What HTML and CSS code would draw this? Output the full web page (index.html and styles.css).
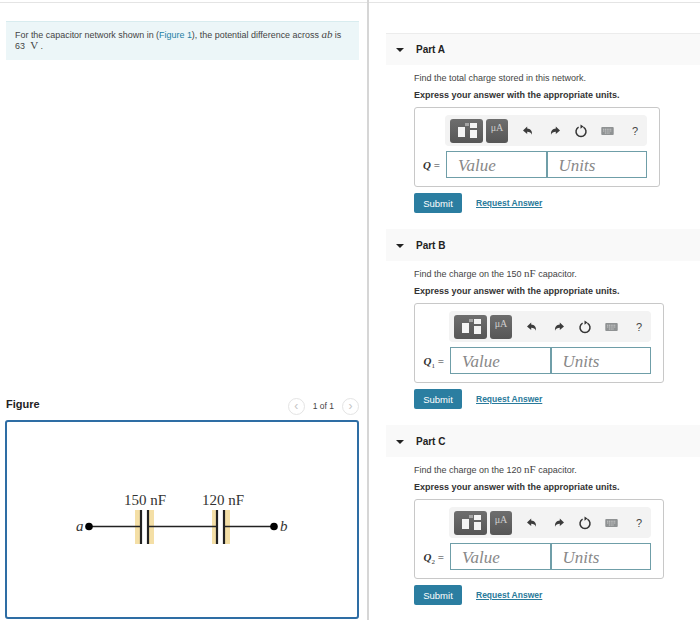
FILE: index.html
```html
<!DOCTYPE html>
<html lang="en">
<head>
<meta charset="utf-8">
<title>Capacitor network</title>
<link rel="stylesheet" href="styles.css">
</head>
<body>
<svg class="defs" width="0" height="0" aria-hidden="true">
  <symbol id="undo" viewBox="0 0 12 12"><path d="M5.200 1.500 1 5.400l4.200 3.700V6.700c2.400 0 3.900.8 4.800 3 .3-3.700-1.600-6-4.800-6.100z" fill="#3c3c3c"/></symbol>
  <symbol id="redo" viewBox="0 0 12 12"><path d="M6.800 1.500 11 5.400 6.800 9.100V6.700c-2.400 0-3.900.8-4.800 3-.3-3.700 1.600-6 4.800-6.100z" fill="#3c3c3c"/></symbol>
  <symbol id="reset" viewBox="0 0 14 14"><path d="M4.600 3.200a5 5 0 1 0 4.800 0" fill="none" stroke="#333" stroke-width="1.500"/><path d="M6.500.4v4.400l3-2.400z" fill="#333"/></symbol>
  <symbol id="kbd" viewBox="0 0 14 9"><rect width="14" height="9" rx="1" fill="#8f9293"/><path d="M2 2.500h10M2 4.500h10M4 6.800h6" stroke="#d4d4d4" stroke-width="1" stroke-dasharray="1.300 .7"/></symbol>
</svg>
<main class="page">
  <section class="left">
    <p class="intro">For the capacitor network shown in (<a class="link" href="#f">Figure 1</a>), the potential difference across <i class="math">ab</i> is<br>63 <span class="serif">&nbsp;V</span> .</p>
    <div class="fig-head">
      <h2>Figure</h2>
      <div class="pager"><span class="round">‹</span><span>1 of 1</span><span class="round">›</span></div>
    </div>
    <div class="figure" id="f">
      <svg width="350" height="194" viewBox="0 0 350 194">
        <rect x="128" y="88" width="6" height="34" fill="#f4dfa6"/>
        <rect x="141" y="88" width="6" height="34" fill="#f4dfa6"/>
        <rect x="205" y="88" width="6" height="34" fill="#f4dfa6"/>
        <rect x="217" y="88" width="6" height="34" fill="#f4dfa6"/>
        <path d="M82 104.500H134M141 104.500H210M217 104.500H267" stroke="#222" stroke-width="1.500"/>
        <path d="M134 88V122M141 88V122M210 88V122M217 88V122" stroke="#222" stroke-width="2.200"/>
        <circle cx="82" cy="104.500" r="3.800" fill="#000"/>
        <circle cx="267" cy="104.500" r="3.800" fill="#000"/>
        <text class="fig-text" x="117" y="83">150 nF</text>
        <text class="fig-text" x="195" y="83">120 nF</text>
        <text class="fig-text fig-i" x="69" y="109">a</text>
        <text class="fig-text fig-i" x="273" y="109">b</text>
      </svg>
    </div>
  </section>
  <section class="right">
    <article class="part">
      <header class="part-head"><span class="tri"></span><h3>Part A</h3></header>
      <div class="part-body">
        <p class="q">Find the total charge stored in this network.</p>
        <p class="express">Express your answer with the appropriate units.</p>
        <div class="box">
          <div class="toolbar">
            <span class="tool tool-a"><b class="sq s1"></b><b class="sq s0"></b><b class="col"><b class="sq s2"></b><b class="sq s3"></b></b></span>
            <span class="tool tool-b">μA</span>
            <svg class="ic i1"><use href="#undo"/></svg><svg class="ic i2"><use href="#redo"/></svg><svg class="ic i3"><use href="#reset"/></svg><svg class="ic i4"><use href="#kbd"/></svg><span class="help">?</span>
          </div>
          <div class="answer"><span class="label"><i>Q</i> =</span><span class="field">Value</span><span class="field">Units</span></div>
        </div>
        <div class="actions"><span class="submit">Submit</span><a class="request" href="#a">Request Answer</a></div>
      </div>
    </article>
    <article class="part">
      <header class="part-head"><span class="tri"></span><h3>Part B</h3></header>
      <div class="part-body">
        <p class="q">Find the charge on the 150 <span class="serif">nF</span> capacitor.</p>
        <p class="express">Express your answer with the appropriate units.</p>
        <div class="box wide">
          <div class="toolbar">
            <span class="tool tool-a"><b class="sq s1"></b><b class="sq s0"></b><b class="col"><b class="sq s2"></b><b class="sq s3"></b></b></span>
            <span class="tool tool-b">μA</span>
            <svg class="ic i1"><use href="#undo"/></svg><svg class="ic i2"><use href="#redo"/></svg><svg class="ic i3"><use href="#reset"/></svg><svg class="ic i4"><use href="#kbd"/></svg><span class="help">?</span>
          </div>
          <div class="answer"><span class="label"><i>Q</i><sub>1</sub> =</span><span class="field">Value</span><span class="field">Units</span></div>
        </div>
        <div class="actions"><span class="submit">Submit</span><a class="request" href="#a">Request Answer</a></div>
      </div>
    </article>
    <article class="part">
      <header class="part-head"><span class="tri"></span><h3>Part C</h3></header>
      <div class="part-body">
        <p class="q">Find the charge on the 120 <span class="serif">nF</span> capacitor.</p>
        <p class="express">Express your answer with the appropriate units.</p>
        <div class="box wide">
          <div class="toolbar">
            <span class="tool tool-a"><b class="sq s1"></b><b class="sq s0"></b><b class="col"><b class="sq s2"></b><b class="sq s3"></b></b></span>
            <span class="tool tool-b">μA</span>
            <svg class="ic i1"><use href="#undo"/></svg><svg class="ic i2"><use href="#redo"/></svg><svg class="ic i3"><use href="#reset"/></svg><svg class="ic i4"><use href="#kbd"/></svg><span class="help">?</span>
          </div>
          <div class="answer"><span class="label"><i>Q</i><sub>2</sub> =</span><span class="field">Value</span><span class="field">Units</span></div>
        </div>
        <div class="actions"><span class="submit">Submit</span><a class="request" href="#a">Request Answer</a></div>
      </div>
    </article>
  </section>
</main>
</body>
</html>
```
FILE: styles.css
```css
* { box-sizing: border-box; }
html, body { margin: 0; padding: 0; height: 621px; overflow: hidden; background: #fff; }
body { font-family: "Liberation Sans", Arial, sans-serif; color: #333; }
.defs { position: absolute; }
.page { display: flex; height: 621px; background: linear-gradient(#e4e4e4, #e4e4e4) 0 2px / 100% 1px no-repeat; }
.left { width: 369px; height: 620px; flex: none; border-right: 2px solid #d6d6d6; padding: 21px 8px 0 5px; }
.intro { margin: 0 0 0 1px; height: 39px; padding: 8px 10px 0 9px; background: #ecf6f8; border-top: 1px solid #d8ecef; font-size: 8.950px; line-height: 10.500px; color: #444; }
.link { color: #1c7fa6; text-decoration: none; }
.math { font-family: "Liberation Serif", serif; font-size: 11px; line-height: 0; }
.serif { font-family: "Liberation Serif", serif; font-size: 11px; line-height: 0; }
.fig-head { display: flex; justify-content: space-between; align-items: center; margin-top: 333px; height: 22px; padding-left: 1px; }
.fig-head h2 { margin: 0; font-size: 11px; color: #222; }
.pager { display: flex; align-items: center; gap: 8px; font-size: 8.500px; color: #444; margin-top: 4px; }
.round { width: 17px; height: 17px; border: 1px solid #e4e4e4; border-radius: 50%; display: flex; align-items: center; justify-content: center; color: #c4c4c4; font-size: 12px; line-height: 1; }
.figure { width: 354px; height: 199px; margin-top: 5px; border: 2px solid #2e6da4; border-radius: 3px; }
.figure svg { display: block; }
.fig-text { font-family: "Liberation Serif", serif; font-size: 15px; fill: #333; }
.fig-i { font-style: italic; }
.right { flex: 1; padding-top: 33px; }
.part { height: 196px; }
.part-head { height: 32px; margin-left: 17px; display: flex; align-items: center; gap: 12px; padding-left: 10px; background: #f9f9f9; border-top: 1px solid #ececec; }
.part:not(:first-child) .part-head { border-top-color: #f9f9f9; }
.tri { width: 0; height: 0; border-left: 4px solid transparent; border-right: 4px solid transparent; border-top: 4px solid #222; }
.part-head h3 { margin: 0; font-size: 10px; color: #222; }
.part-body { padding: 8px 0 0 45px; }
.q { margin: 0; font-size: 9px; line-height: 11px; color: #444; }
.express { margin: 6px 0 0; font-size: 9px; line-height: 11px; font-weight: 700; color: #333; }
.box { width: 246px; height: 80px; margin-top: 6px; border: 1px solid #c8c8c8; border-radius: 3px; padding: 7px 12px 0 0; display: flex; flex-direction: column; align-items: flex-end; }
.box.wide { width: 250px; }
.toolbar { width: 202px; height: 31px; background: #f3f3f3; border-radius: 4px; display: flex; align-items: center; padding-left: 5px; }
.tool { display: flex; align-items: center; justify-content: center; height: 24px; background: linear-gradient(#6e6e6e, #565656); border-radius: 3px; }
.tool-a { width: 33px; padding-left: 1px; }
.tool-b { width: 22px; margin-left: 3px; font-family: "Liberation Serif", serif; font-size: 10px; color: #cfcfcf; align-items: flex-start; padding-top: 3px; }
.col { display: flex; flex-direction: column; gap: 2px; margin-left: 1px; }
.sq { display: block; background: #f4f4f4; }
.s1 { width: 7px; height: 10px; margin-top: 2px; }
.s0 { width: 4px; height: 3px; margin: -13px 0 0 0; background: #a5a5a5; }
.s2 { width: 7px; height: 5px; }
.s3 { width: 7px; height: 8px; }
.ic { flex: none; }
.i1 { width: 12px; height: 12px; margin-left: 14px; }
.i2 { width: 12px; height: 12px; margin-left: 15px; }
.i3 { width: 14px; height: 14px; margin-left: 13px; }
.i4 { width: 13px; height: 8px; margin-left: 13px; }
.help { margin-left: 18px; font-size: 11px; color: #444; }
.answer { display: flex; align-items: center; margin-top: 5px; }
.label { margin-right: 6px; font-family: "Liberation Serif", serif; font-size: 11px; color: #333; }
.label i { font-weight: 700; }
.label sub { font-size: 7px; line-height: 0; }
.field { width: 100.500px; height: 27px; border: 1px solid #6f9ea8; padding-left: 11px; font-family: "Liberation Serif", serif; font-style: italic; font-size: 17px; line-height: 27px; color: #888; background: #fff; }
.actions { display: flex; align-items: center; gap: 14px; margin-top: 6px; }
.submit { width: 48px; height: 20px; background: #2b7ea1; border-radius: 2px; color: #fff; font-size: 9.500px; display: flex; align-items: center; justify-content: center; }
.request { font-size: 8.500px; font-weight: 700; color: #2a7a9b; }
```
